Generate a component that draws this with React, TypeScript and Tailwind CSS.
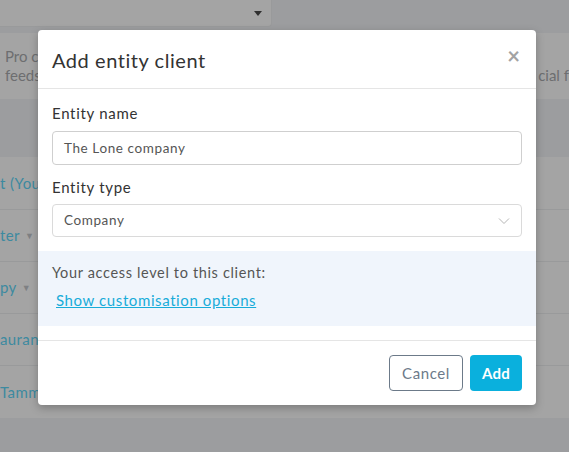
import React from "react";

const font = { fontFamily: "Lato, 'Open Sans', sans-serif" };

function Row({ text, caret, last }: { text: string; caret?: boolean; last?: boolean }) {
  return (
    <div className={`h-[52px] flex items-center text-[15px] tracking-[0.4px] text-[#3d8aa0] ${last ? "" : "border-b border-[#999a9b]"}`}>
      <span className="whitespace-nowrap">{text}</span>
      {caret && <span className="ml-[5px] text-[9px] text-[#7e8083]">▼</span>}
    </div>
  );
}

export default function App() {
  return (
    <div className="relative w-[569px] h-[452px] overflow-hidden bg-[#9c9d9f]" style={font}>
      {/* background page */}
      <div className="h-[33px] flex">
        <div className="w-[272px] h-[27px] bg-[#a4a4a4] rounded-br-[4px] border-r border-b border-[#999a9b] flex items-center justify-end pr-[9px]">
          <span className="block w-0 h-0 border-l-[4px] border-r-[4px] border-t-[5px] border-l-transparent border-r-transparent border-t-[#2f2f2f]" />
        </div>
      </div>
      <div className="h-[66px] bg-[#a4a4a4] flex justify-between items-center text-[15px] leading-[19px] text-[#6d6e70]">
        <div className="pl-[5px]">
          <div>Pro c</div>
          <div>feeds</div>
        </div>
        <div className="pt-[19px] whitespace-nowrap">cial f</div>
      </div>
      <div className="h-[58px] bg-[#9c9d9f]" />
      <div className="bg-[#a4a4a4] pt-[1px]">
        <Row text="t (You" />
        <Row text="ter" caret />
        <Row text="py" caret />
        <Row text="auran" />
        <Row text=" Tamm" last />
      </div>

      {/* modal */}
      <div className="absolute left-[38px] top-[30px] w-[498px] bg-white rounded-[4px] shadow-[0_3px_9px_rgba(0,0,0,0.25)]">
        <div className="h-[59px] flex items-center justify-between pl-[14px] pr-[16px] border-b border-[#e5e5e5]">
          <h2 className="text-[20px] text-[#333] tracking-[0.55px] mt-[2px]">Add entity client</h2>
          <span className="text-[22px] font-bold text-[#a3a3a3] leading-none -mt-[6px]">×</span>
        </div>
        <div className="px-[14px] pt-[14px]">
          <label className="block text-[15px] text-[#333] leading-[21px] tracking-[0.7px]">Entity name</label>
          <div className="mt-[7px] h-[34px] border border-[#cfcfcf] rounded-[4px] flex items-center px-[11px] text-[13.5px] tracking-[0.6px] text-[#555]">
            The Lone company
          </div>
          <label className="block mt-[12px] text-[15px] text-[#333] leading-[21px] tracking-[0.7px]">Entity type</label>
          <div className="mt-[6px] h-[33px] border border-[#dadada] rounded-[4px] flex items-center justify-between px-[11px] text-[13.5px] tracking-[0.6px] text-[#555]">
            <span>Company</span>
            <svg width="12" height="8" viewBox="0 0 12 8" fill="none" stroke="#b5b5b5" strokeWidth="1">
              <path d="M1 1.5l5 5 5-5" />
            </svg>
          </div>
        </div>
        <div className="mt-[14px] h-[75px] bg-[#f0f5fc] px-[14px] pt-[12px]">
          <div className="text-[14.5px] text-[#555] leading-[20px] tracking-[0.65px]">Your access level to this client:</div>
          <a className="block mt-[7px] ml-[4px] text-[15px] text-[#18acd9] underline leading-[20px] tracking-[0.6px]">Show customisation options</a>
        </div>
        <div className="h-[14px]" />
        <div className="border-t border-[#e5e5e5] h-[65px] flex items-center justify-end gap-[7px] pr-[14px]">
          <button className="h-[36px] w-[74px] border border-[#6c7a89] rounded-[4px] text-[15px] tracking-[0.6px] text-[#6c7a89] bg-white">Cancel</button>
          <button className="h-[36px] w-[52px] rounded-[4px] text-[15px] font-bold tracking-[0.3px] text-white bg-[#0ab0dd]">Add</button>
        </div>
      </div>
    </div>
  );
}
